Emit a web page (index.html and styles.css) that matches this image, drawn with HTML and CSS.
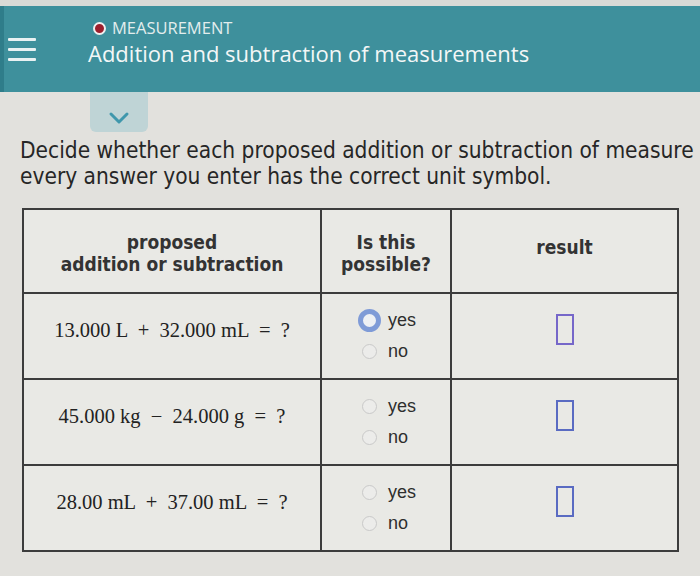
FILE: index.html
```html
<!DOCTYPE html>
<html lang="en">
<head>
  <meta charset="UTF-8">
  <meta name="viewport" content="width=device-width, initial-scale=1.0">
  <title>Addition and subtraction of measurements</title>
  <link rel="stylesheet" href="styles.css">
</head>
<body>

  <div class="top-strip"></div>

  <!-- Header Section -->
  <div class="header">
    <button class="menu-button" aria-label="Menu">
      <span></span><span></span><span></span>
    </button>
    <div class="header-titles">
      <div class="topic"><span class="topic-dot"></span>MEASUREMENT</div>
      <h1>Addition and subtraction of measurements</h1>
    </div>
  </div>

  <div class="tab">
    <svg width="22" height="14" viewBox="0 0 22 14">
      <polyline points="3,3 11,11 19,3" fill="none" stroke="#3f97ac" stroke-width="3" stroke-linecap="round" stroke-linejoin="round"/>
    </svg>
  </div>

  <!-- Question Section -->
  <p class="instructions">
    <span>Decide whether each proposed addition or subtraction of measure</span>
    <span>every answer you enter has the correct unit symbol.</span>
  </p>

  <table class="answer-table">
    <colgroup>
      <col class="col-expr">
      <col class="col-possible">
      <col class="col-result">
    </colgroup>
    <thead>
      <tr>
        <th>proposed<br>addition or subtraction</th>
        <th>Is this<br>possible?</th>
        <th class="result-head">result</th>
      </tr>
    </thead>
    <tbody>
      <tr>
        <td class="expr">13.000 L &nbsp;+ &nbsp;32.000 mL &nbsp;= &nbsp;?</td>
        <td>
          <div class="choices">
            <label class="choice"><span class="radio selected"></span>yes</label>
            <label class="choice"><span class="radio"></span>no</label>
          </div>
        </td>
        <td class="result"><span class="answer-box first"></span></td>
      </tr>
      <tr>
        <td class="expr">45.000 kg &nbsp;&minus; &nbsp;24.000 g &nbsp;= &nbsp;?</td>
        <td>
          <div class="choices">
            <label class="choice"><span class="radio"></span>yes</label>
            <label class="choice"><span class="radio"></span>no</label>
          </div>
        </td>
        <td class="result"><span class="answer-box"></span></td>
      </tr>
      <tr>
        <td class="expr">28.00 mL &nbsp;+ &nbsp;37.00 mL &nbsp;= &nbsp;?</td>
        <td>
          <div class="choices">
            <label class="choice"><span class="radio"></span>yes</label>
            <label class="choice"><span class="radio"></span>no</label>
          </div>
        </td>
        <td class="result"><span class="answer-box"></span></td>
      </tr>
    </tbody>
  </table>

</body>
</html>
```

FILE: styles.css
```css
/* General styling */
html, body {
  width: 700px;
  height: 576px;
  overflow: hidden;
}

body {
  margin: 0;
  padding: 0;
  background-color: #e2e1dd;
  font-family: "DejaVu Sans", Verdana, sans-serif;
}

.top-strip {
  height: 6px;
  background-color: #d9dad6;
}

/* Header Section */
.header {
  display: flex;
  align-items: center;
  height: 86px;
  background-color: #3e909c;
  border-left: 4px solid #2f7d8a;
  box-sizing: border-box;
}

.menu-button {
  display: flex;
  flex-direction: column;
  gap: 7px;
  width: 28px;
  margin: 0 0 0 4px;
  padding: 0;
  background: none;
  border: none;
  cursor: pointer;
}

.menu-button span {
  display: block;
  height: 3px;
  background-color: #e9f1f2;
  border-radius: 1px;
}

.header-titles {
  margin-left: 52px;
  margin-top: -14px;
  color: #f3f7f7;
  font-family: "Open Sans", sans-serif;
}

.topic {
  display: flex;
  align-items: center;
  gap: 6px;
  font-size: 16.5px;
  line-height: 22px;
  color: #e3eded;
  margin-left: 5px;
}

.topic-dot {
  width: 9px;
  height: 9px;
  border-radius: 50%;
  background-color: #9c1f2d;
  border: 2px solid #f0f0f0;
}

.header h1 {
  margin: 0;
  font-size: 22px;
  line-height: 28px;
  font-weight: 400;
}

.tab {
  display: flex;
  justify-content: center;
  align-items: flex-end;
  width: 58px;
  height: 40px;
  margin-left: 90px;
  padding-bottom: 7px;
  box-sizing: border-box;
  background-color: #bfd4d6;
  border-radius: 0 0 6px 6px;
}

/* Question Section */
.instructions {
  margin: 5px 0 0 20px;
  font-size: 22.5px;
  line-height: 26px;
  color: #262626;
  white-space: nowrap;
  font-stretch: condensed;
}

.instructions span {
  display: block;
}

.answer-table {
  margin: 19px 0 0 22px;
  width: 657px;
  border-collapse: collapse;
  table-layout: fixed;
  background-color: #e9e9e5;
}

.col-expr {
  width: 298px;
}

.col-possible {
  width: 130px;
}

.answer-table th,
.answer-table td {
  border: 2px solid #3c3c3c;
  text-align: center;
  padding: 0;
}

.answer-table thead tr {
  height: 84px;
}

.answer-table tbody tr {
  height: 86px;
}

.answer-table th {
  padding-top: 4px;
  font-size: 19px;
  line-height: 22px;
  font-weight: bold;
  color: #333;
  font-stretch: condensed;
}

.answer-table th.result-head {
  padding: 0 0 8px 0;
}

.expr {
  font-family: "Liberation Serif", "Times New Roman", serif;
  font-size: 20.5px;
  color: #222;
  padding-bottom: 12px !important;
}

.choices {
  display: inline-flex;
  flex-direction: column;
  gap: 9px;
  margin-left: 2px;
}

.choice {
  display: flex;
  align-items: center;
  gap: 6px;
  font-family: "Liberation Sans", Arial, sans-serif;
  font-size: 18px;
  color: #2e2e2e;
  cursor: pointer;
}

.radio {
  display: flex;
  justify-content: center;
  align-items: center;
  width: 24px;
  height: 22px;
}

.radio::before {
  content: "";
  width: 13px;
  height: 13px;
  border-radius: 50%;
  border: 1px solid #c9c9c9;
  background-color: #ececea;
}

.radio.selected::before {
  width: 13px;
  height: 13px;
  border: 5px solid #7f9bd7;
  background-color: #eef0f4;
}

.result {
  padding-bottom: 14px !important;
}

.answer-box {
  display: inline-block;
  width: 14px;
  height: 27px;
  border: 2px solid #5a6bc2;
  vertical-align: middle;
}

.answer-box.first {
  border-color: #7667c9;
}
```
